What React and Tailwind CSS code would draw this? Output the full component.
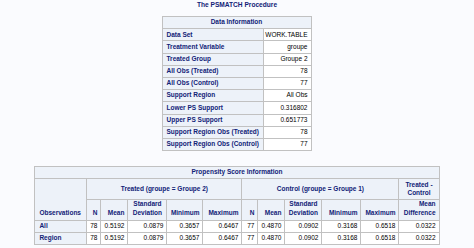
import React from 'react';

const HEAD = 'bg-[#edf2f9] border border-[#c1c1c1] text-[#112277] font-bold p-0';
const CELL = 'bg-white border border-[#c1c1c1] text-black font-normal text-right p-0 pr-[3px]';

const DATA_INFO = [
  ['Data Set', 'WORK.TABLE'],
  ['Treatment Variable', 'groupe'],
  ['Treated Group', 'Groupe 2'],
  ['All Obs (Treated)', '78'],
  ['All Obs (Control)', '77'],
  ['Support Region', 'All Obs'],
  ['Lower PS Support', '0.316802'],
  ['Upper PS Support', '0.651773'],
  ['Support Region Obs (Treated)', '78'],
  ['Support Region Obs (Control)', '77'],
];

const SCORE_ROWS = [
  ['All', '78', '0.5192', '0.0879', '0.3657', '0.6467', '77', '0.4870', '0.0902', '0.3168', '0.6518', '0.0322'],
  ['Region', '78', '0.5192', '0.0879', '0.3657', '0.6467', '77', '0.4870', '0.0902', '0.3168', '0.6518', '0.0322'],
];

const COL_WIDTHS = ['w-[52px]', 'w-[14px]', 'w-[27px]', 'w-[39px]', 'w-[36px]', 'w-[39px]', 'w-[16px]', 'w-[27px]', 'w-[37px]', 'w-[39px]', 'w-[38px]', 'w-[40px]'];

const StatHeaders = () => (
  <>
    <th className={`${HEAD} text-right align-bottom pr-[3px] pb-[3px]`}>N</th>
    <th className={`${HEAD} text-right align-bottom pr-[3px] pb-[3px]`}>Mean</th>
    <th className={`${HEAD} text-center align-bottom pb-[3px]`}>Standard<br />Deviation</th>
    <th className={`${HEAD} text-right align-bottom pr-[3px] pb-[3px]`}>Minimum</th>
    <th className={`${HEAD} text-right align-bottom pr-[3px] pb-[3px]`}>Maximum</th>
  </>
);

const App = () => {
  return (
    <div className="w-[474px] h-[248px] overflow-hidden bg-[#fafbfe] flex flex-col items-center font-['Liberation_Sans',Arial,sans-serif] text-[6.5px] leading-[8.5px]">
      <h1 className="mt-[1px] font-bold text-[#112277] text-[6.6px] leading-[8px]">The PSMATCH Procedure</h1>

      {/* Data Information */}
      <table className="mt-[7px] table-fixed border-collapse w-[149px] ml-[-1px]">
        <colgroup>
          <col className="w-[101px]" />
          <col className="w-[48px]" />
        </colgroup>
        <thead>
          <tr className="h-[12.2px]">
            <th colSpan={2} className={`${HEAD} text-center`}>Data Information</th>
          </tr>
        </thead>
        <tbody>
          {DATA_INFO.map(([label, value]) => (
            <tr key={label} className="h-[12.2px]">
              <th className={`${HEAD} text-left pl-[4px]`}>{label}</th>
              <td className={CELL}>{value}</td>
            </tr>
          ))}
        </tbody>
      </table>

      {/* Propensity Score Information */}
      <table className="mt-[15px] table-fixed border-collapse w-[404px]">
        <colgroup>
          {COL_WIDTHS.map((w, i) => (
            <col key={i} className={w} />
          ))}
        </colgroup>
        <thead>
          <tr className="h-[12px]">
            <th colSpan={12} className={`${HEAD} text-center`}>Propensity Score Information</th>
          </tr>
          <tr className="h-[21px]">
            <th rowSpan={2} className={`${HEAD} text-left align-bottom pl-[4px] pb-[3px]`}>Observations</th>
            <th colSpan={5} className={`${HEAD} text-center`}>Treated (groupe = Groupe 2)</th>
            <th colSpan={5} className={`${HEAD} text-center`}>Control (groupe = Groupe 1)</th>
            <th className={`${HEAD} text-center`}>Treated -<br />Control</th>
          </tr>
          <tr className="h-[20px]">
            <StatHeaders />
            <StatHeaders />
            <th className={`${HEAD} text-right align-bottom pr-[3px] pb-[3px]`}>Mean<br />Difference</th>
          </tr>
        </thead>
        <tbody>
          {SCORE_ROWS.map(([label, ...vals]) => (
            <tr key={label} className="h-[12px]">
              <th className={`${HEAD} text-left pl-[4px]`}>{label}</th>
              {vals.map((v, i) => (
                <td key={i} className={CELL}>{v}</td>
              ))}
            </tr>
          ))}
        </tbody>
      </table>
    </div>
  );
};

export default App;
